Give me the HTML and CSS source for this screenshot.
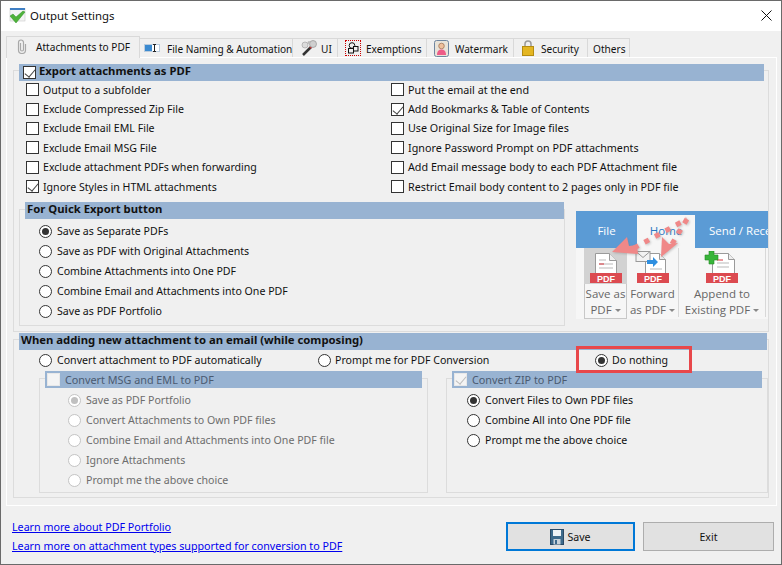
FILE: index.html
```html
<!DOCTYPE html>
<html lang="en">
<head>
<meta charset="utf-8">
<title>Output Settings</title>
<link rel="stylesheet" href="styles.css">
</head>
<body>
<div class="window">
  <header class="titlebar">
    <svg class="appicon" width="17" height="17" viewBox="0 0 17 17"><rect x="1" y="0" width="15" height="13" fill="#f4f4f4" stroke="#c9c9c9" stroke-width=".6"/><rect x="1" y="0" width="15" height="2" fill="#3f7fc4"/><path d="M1 8l3-2 3 3 7-6 2 1-9 11z" fill="#4fb33a" stroke="#2f8f2a" stroke-width=".5"/></svg>
    <span class="title">Output Settings</span>
    <svg class="close" width="11" height="11" viewBox="0 0 11 11"><path d="M.5.5l10 10M10.5.5l-10 10" stroke="#111" stroke-width="1" fill="none"/></svg>
  </header>

  <nav class="tabs">
    <div class="tab active t1"><svg width="10" height="15" viewBox="0 0 10 15"><path d="M3.500 4v6.500a1.500 1.500 0 0 0 3 0V3.500a2.500 2.500 0 0 0-5 0v7.500a3.500 3.500 0 0 0 7 0V5" fill="none" stroke="#a8a8a8" stroke-width="1.200"/></svg><span>Attachments to PDF</span></div>
    <div class="tab t2"><svg width="17" height="9" viewBox="0 0 17 9"><rect x=".5" y=".5" width="15" height="7" fill="#fff" stroke="#bcd"/><rect x="1" y="1" width="7" height="6" fill="#3b8ad0"/><path d="M9 .5h3M10.500.5v7M9 7.500h3" stroke="#222" fill="none"/></svg><span>File Naming &amp; Automation</span></div>
    <div class="tab t3"><svg width="18" height="17" viewBox="0 0 18 17"><path d="M3 15l8-8" stroke="#333" stroke-width="2.500"/><path d="M10 8l2-2" stroke="#c33" stroke-width="2"/><circle cx="13" cy="4" r="3.500" fill="#cfcfcf" stroke="#888" stroke-width=".6"/><circle cx="5" cy="5" r="3" fill="#dcdcdc" stroke="#999" stroke-width=".6"/><circle cx="9" cy="2.500" r="1.500" fill="#bbb"/></svg><span>UI</span></div>
    <div class="tab t4"><div class="focusbox"><svg width="12" height="12" viewBox="0 0 12 12"><circle cx="5" cy="3.500" r="2.800" fill="none" stroke="#111"/><rect x="1.500" y="6.500" width="5" height="4.500" fill="#f0f0f0" stroke="#111"/><rect x="6.500" y="4.500" width="4.500" height="4.500" fill="#f0f0f0" stroke="#111"/></svg></div><span>Exemptions</span></div>
    <div class="tab t5"><svg width="15" height="17" viewBox="0 0 15 17"><rect x=".5" y=".5" width="14" height="16" rx="2" fill="#e9e3d8" stroke="#6f86a0"/><circle cx="7.500" cy="6" r="2.800" fill="#f0c09c" stroke="#8a5a3a" stroke-width=".6"/><path d="M3 15c0-4 2-5.500 4.500-5.500S12 11 12 15z" fill="#ee5c88"/></svg><span>Watermark</span></div>
    <div class="tab t6"><svg width="12" height="16" viewBox="0 0 12 16"><path d="M3 7V4a3 3 0 0 1 6 0v3" fill="none" stroke="#9b9b9b" stroke-width="1.500"/><rect x="0.500" y="6.500" width="11" height="9" fill="#e4b622" stroke="#b58c12"/></svg><span>Security</span></div>
    <div class="tab t7"><span>Others</span></div>
  </nav>

  <main class="panel">
    <section class="group">
      <div class="bar bar-main"><span class="cb on barcb"></span><b>Export attachments as PDF</b></div>
      <div class="checks">
        <label class="opt"><span class="cb"></span>Output to a subfolder</label>
        <label class="opt"><span class="cb"></span>Put the email at the end</label>
        <label class="opt"><span class="cb"></span>Exclude Compressed Zip File</label>
        <label class="opt"><span class="cb on"></span>Add Bookmarks &amp; Table of Contents</label>
        <label class="opt"><span class="cb"></span>Exclude Email EML File</label>
        <label class="opt"><span class="cb"></span>Use Original Size for Image files</label>
        <label class="opt"><span class="cb"></span>Exclude Email MSG File</label>
        <label class="opt"><span class="cb"></span>Ignore Password Prompt on PDF attachments</label>
        <label class="opt"><span class="cb"></span>Exclude attachment PDFs when forwarding</label>
        <label class="opt"><span class="cb"></span>Add Email message body to each PDF Attachment file</label>
        <label class="opt"><span class="cb on"></span>Ignore Styles in HTML attachments</label>
        <label class="opt"><span class="cb"></span>Restrict Email body content to 2 pages only in PDF file</label>
      </div>
      <div class="quickrow">
        <div class="group quick">
          <div class="bar quickbar"><b>For Quick Export button</b></div>
          <div class="radios quickradios">
            <label class="opt"><span class="rb on"></span>Save as Separate PDFs</label>
            <label class="opt"><span class="rb"></span>Save as PDF with Original Attachments</label>
            <label class="opt"><span class="rb"></span>Combine Attachments into One PDF</label>
            <label class="opt"><span class="rb"></span>Combine Email and Attachments into One PDF</label>
            <label class="opt"><span class="rb"></span>Save as PDF Portfolio</label>
          </div>
        </div>
        <div class="ribbon">
          <div class="rtabs">
            <span class="rtab rfile">File</span>
            <span class="rtab rhome">Home</span>
            <span class="rtab rsend">Send / Rece</span>
          </div>
          <div class="rtools">
            <div class="tool tool-save">
              <div class="toolicon"><svg width="36" height="33" viewBox="0 0 36 33"><path d="M7.500 2.500h14l7 7v17h-21z" fill="#fff" stroke="#9a9a9a"/><path d="M21.500 2.500v7h7" fill="#eee" stroke="#9a9a9a"/><path d="M11 9h7M11 13h14M11 17h14" stroke="#b9b9b9"/><path d="M11 13h5" stroke="#d9343c"/><rect x="2" y="22" width="32" height="10" fill="#dc4a50"/><text x="18" y="30.500" class="pdftext">PDF</text></svg></div>
              <div class="toollabel labelbox">Save as<br>PDF<i class="caret"></i></div>
            </div>
            <div class="tool tool-fwd">
              <div class="toolicon"><svg width="38" height="33" viewBox="0 0 38 33"><path d="M11.500 2.500h14l6 6v18h-20z" fill="#fff" stroke="#9a9a9a"/><path d="M25.500 2.500v6h6" fill="#eee" stroke="#9a9a9a"/><rect x="2" y="0.500" width="14" height="10" fill="#f3f3f3" stroke="#9a9a9a"/><path d="M2 .5l7 6 7-6" fill="none" stroke="#9a9a9a"/><path d="M13 9h6v-3l5 5-5 5v-3h-6z" fill="#2f8fe0"/><path d="M16 18h12" stroke="#b9b9b9"/><rect x="3" y="22" width="32" height="10" fill="#dc4a50"/><text x="19" y="30.500" class="pdftext">PDF</text></svg></div>
              <div class="toollabel">Forward<br>as PDF<i class="caret"></i></div>
            </div>
            <div class="tool tool-app">
              <div class="toolicon"><svg width="36" height="33" viewBox="0 0 36 33"><path d="M8.500 2.500h16l6 6v18h-22z" fill="#fff" stroke="#9a9a9a"/><path d="M24.500 2.500v6h6" fill="#eee" stroke="#9a9a9a"/><path d="M13 12h12M13 16h12" stroke="#b9b9b9"/><path d="M13 9h6" stroke="#d9343c"/><path d="M6 0h5v4h4v5h-4v4H6V9H2V4h4z" transform="translate(-1 0)" fill="#38b53a" stroke="#2a8a2a" stroke-width=".6"/><rect x="2" y="22" width="32" height="10" fill="#dc4a50"/><text x="18" y="30.500" class="pdftext">PDF</text></svg></div>
              <div class="toollabel">Append to<br>Existing PDF<i class="caret"></i></div>
            </div>
          </div>
          <svg class="arrows" width="192" height="108" viewBox="0 0 192 108">
            <g fill="#f08888">
              <path d="M36 41L51 26l2 9 8-1 1 9z"/>
              <path d="M85 46l1-20 7 7 9-1z"/>
            </g>
            <path d="M58 37L111 8" stroke="#f08888" stroke-width="5" stroke-dasharray="5 7" fill="none"/>
            <path d="M96 33L111 8" stroke="#f08888" stroke-width="5" stroke-dasharray="5 7" fill="none"/>
          </svg>
        </div>
      </div>
    </section>

    <section class="group composing">
      <div class="bar bar-compose"><b>When adding new attachment to an email (while composing)</b></div>
      <div class="moderow">
        <label class="opt"><span class="rb"></span>Convert attachment to PDF automatically</label>
        <label class="opt"><span class="rb"></span>Prompt me for PDF Conversion</label>
        <label class="opt"><span class="rb on"></span>Do nothing</label>
      </div>
      <div class="highlight"></div>
      <div class="subs">
        <div class="group sub sub-left">
          <div class="bar subbar disabled"><span class="cb blank"></span><span class="subtitle">Convert MSG and EML to PDF</span></div>
          <div class="radios subradios-left disabled">
            <label class="opt"><span class="rb on"></span>Save as PDF Portfolio</label>
            <label class="opt"><span class="rb"></span>Convert Attachments to Own PDF files</label>
            <label class="opt"><span class="rb"></span>Combine Email and Attachments into One PDF file</label>
            <label class="opt"><span class="rb"></span>Ignore Attachments</label>
            <label class="opt"><span class="rb"></span>Prompt me the above choice</label>
          </div>
        </div>
        <div class="group sub sub-right">
          <div class="bar subbar disabled"><span class="cb blank on"></span><span class="subtitle">Convert ZIP to PDF</span></div>
          <div class="radios subradios-right">
            <label class="opt"><span class="rb on"></span>Convert Files to Own PDF files</label>
            <label class="opt"><span class="rb"></span>Combine All into One PDF file</label>
            <label class="opt"><span class="rb"></span>Prompt me the above choice</label>
          </div>
        </div>
      </div>
    </section>
  </main>

  <footer class="footer">
    <div class="links">
      <a href="#">Learn more about PDF Portfolio</a>
      <a href="#">Learn more on attachment types supported for conversion to PDF</a>
    </div>
    <div class="buttons">
      <button class="btn primary"><svg width="14" height="16" viewBox="0 0 14 16"><rect x=".5" y=".5" width="13" height="15" fill="#3d6a8c" stroke="#2a4a66"/><rect x="3" y="1" width="8" height="6" fill="#eef3f7"/><rect x="3.500" y="10" width="7" height="5.500" fill="#c9d3db"/><rect x="5" y="11" width="2" height="4" fill="#3d6a8c"/></svg>Save</button>
      <button class="btn">Exit</button>
    </div>
  </footer>
</div>
</body>
</html>
```
FILE: styles.css
```css
* { box-sizing: border-box; }
html, body { margin: 0; padding: 0; }
body {
  width: 782px;
  height: 565px;
  overflow: hidden;
  font-family: "Noto Sans", "Liberation Sans", sans-serif;
  font-size: 10.6px;
  color: #111;
  background: #f0f0f0;
}
svg { flex: none; }
.window {
  width: 782px;
  height: 565px;
  border: 1px solid #6a6a6a;
  background: #f0f0f0;
  display: flex;
  flex-direction: column;
  position: relative;
}
.titlebar {
  height: 30px;
  background: #fff;
  display: flex;
  align-items: center;
  padding: 0 9px 0 8px;
  flex: none;
}
.appicon { margin-right: 4px; }
.title { font-size: 11.4px; flex: 1; margin-bottom: 2px; }
.close { margin-bottom: 2px; }

.tabs {
  display: flex;
  align-items: flex-end;
  height: 22px;
  margin: 4px 0 0 5px;
  flex: none;
  position: relative;
  z-index: 2;
  font-size: 10.1px;
}
.tab {
  height: 19px;
  display: flex;
  align-items: center;
  border: 1px solid #d9d9d9;
  border-left: 0;
  border-bottom: 0;
  background: #f0f0f0;
  flex: none;
  white-space: nowrap;
}
.tab:not(.active) > span { margin-top: 2px; }
.tab.active {
  height: 22px;
  border-left: 1px solid #d9d9d9;
  margin-bottom: -1px;
  padding-bottom: 2px;
  background: #f0f0f0;
}
.t1 { width: 134px; padding-left: 10px; gap: 9px; }
.t2 { width: 153px; padding-left: 4px; gap: 6px; }
.t3 { width: 45px; padding-left: 7px; gap: 3px; }
.t4 { width: 89px; padding-left: 7px; gap: 5px; }
.t5 { width: 87px; padding-left: 7px; gap: 6px; }
.t6 { width: 74px; padding-left: 8px; gap: 7px; }
.t7 { width: 42px; padding-left: 5px; }
.focusbox {
  width: 16px;
  height: 16px;
  border: 1px dotted #c00;
  display: flex;
  align-items: center;
  justify-content: center;
  flex: none;
}

.panel {
  flex: none;
  height: 449px;
  margin-left: 5px;
  width: 771px;
  border: 1px solid #fff;
  padding: 12px 0 6px 6px;
}
.group {
  border: 1px solid #dcdcdc;
}
.panel > .group {
  width: 756px;
  padding-left: 5px;
}
.bar {
  height: 17px;
  margin-top: -7px;
  background: #98b3d2;
  display: flex;
  align-items: center;
  white-space: nowrap;
  color: #111;
}
.bar b { font-weight: 700; font-size: 11.3px; margin-bottom: 5px; }
.bar-main { margin-right: 4px; padding-left: 4px; gap: 3px; }
.barcb { background: #f0f0f0; }
.checks {
  display: grid;
  grid-template-columns: 365px 1fr;
  grid-auto-rows: 19.4px;
  height: 116px;
  margin: -1px 0 13px;
  padding-left: 7px;
}
.checks .opt:nth-child(even) { font-size: 10.75px; }
.opt {
  display: flex;
  align-items: center;
  white-space: nowrap;
}
.cb {
  width: 13px;
  height: 13px;
  border: 1px solid #333;
  background: #fff;
  flex: none;
  margin-right: 4px;
  position: relative;
  display: inline-block;
}
.cb.on::after {
  content: "";
  position: absolute;
  left: 3px;
  top: 0;
  width: 5px;
  height: 9px;
  border: solid #444;
  border-width: 0 1.300px 1.300px 0;
  transform: rotate(40deg);
}
.barcb { margin-right: 0; }
.rb {
  width: 13px;
  height: 13px;
  border: 1px solid #333;
  border-radius: 50%;
  background: #fff;
  flex: none;
  margin-right: 5px;
  position: relative;
  display: inline-block;
}
.rb.on::after {
  content: "";
  position: absolute;
  left: 2px;
  top: 2px;
  width: 7px;
  height: 7px;
  border-radius: 50%;
  background: #333;
}

.quickrow { display: flex; height: 122px; align-items: flex-start; }
.quick { width: 547px; height: 117px; }
.quickbar { margin: -8px 0 0 5px; padding-left: 2px; }
.radios { display: grid; grid-auto-rows: 20px; padding-top: 2px; }
.quickradios { padding-left: 19px; }

.ribbon {
  width: 192px;
  height: 108px;
  margin: 2px 0 0 11px;
  position: relative;
  background: #f6f6f6;
  flex: none;
  overflow: hidden;
}
.rtabs {
  height: 37px;
  background: #5b9bd5;
  display: flex;
  align-items: flex-end;
  font-family: "Open Sans", sans-serif;
  font-size: 11.5px;
  color: #fff;
  white-space: nowrap;
}
.rtab { height: 33px; display: flex; align-items: center; justify-content: center; flex: none; padding-bottom: 3px; }
.rfile { width: 61px; }
.rhome { width: 58px; background: #f6f6f6; color: #2b79c2; }
.rsend { width: 73px; justify-content: flex-start; padding-left: 14px; overflow: hidden; }
.rtools { display: flex; height: 71px; padding-left: 8px; font-family: "Open Sans", sans-serif; color: #666; font-size: 11.500px; }
.tool { display: flex; flex-direction: column; align-items: center; flex: none; }
.tool-save { width: 43px; height: 69px; }
.tool-fwd { width: 52px; border-right: 1px solid #d8d8d8; height: 69px; }
.tool-app { width: 87px; border-right: 1px solid #d8d8d8; height: 69px; }
.toolicon { height: 37px; width: 100%; display: flex; justify-content: center; padding-top: 3px; }
.tool-save .toolicon { background: #d2d2d2; }
.toollabel { text-align: center; line-height: 16px; white-space: nowrap; flex: 1; width: 100%; padding-top: 2px; }
.labelbox { border: 1px solid #c8c8c8; border-top: 0; }
.caret {
  display: inline-block;
  width: 0;
  height: 0;
  border: 3px solid transparent;
  border-top-color: #888;
  border-bottom: 0;
  margin: 0 0 2px 3px;
}
.pdftext { font-family: "Liberation Sans", sans-serif; font-weight: 700; font-size: 9px; fill: #fff; text-anchor: middle; }
.arrows { position: absolute; left: 0; top: 0; filter: drop-shadow(1px 1px 1px rgba(120, 120, 120, .4)); }

.composing { margin-top: 7px; height: 159px; position: relative; }
.bar-compose { margin-right: 1px; padding-left: 2px; }
.moderow {
  display: grid;
  grid-template-columns: 279px 277px 1fr;
  height: 20px;
  padding-left: 20px;
}
.moderow .opt:not(:first-child) .rb { margin-right: 4px; }
.highlight {
  position: absolute;
  left: 562px;
  top: 6px;
  width: 116px;
  height: 27px;
  border: 3px solid #e8474a;
  pointer-events: none;
}
.subs { display: flex; gap: 18px; margin-top: 8px; padding-left: 20px; }
.sub { height: 115px; }
.sub-left { width: 389px; }
.sub-right { width: 322px; }
.subbar { margin: -8px 5px 0; padding-left: 2px; }
.subtitle { font-size: 10.8px; margin-bottom: 1px; }
.disabled { color: #6d6d6d; }
.subbar.disabled { color: #4a5a70; }
.cb.blank { border: 1px solid #e8e8e8; margin-right: 5px; background: #f4f4f4; }
.cb.blank.on::after { border-color: #bdbdbd; }
.disabled .rb { border-color: #c4c4c4; }
.disabled .rb.on::after { background: #c0c0c0; }
.subradios-left { padding-left: 28px; }
.subradios-right { padding-left: 20px; }

.footer {
  flex: 1;
  display: flex;
  justify-content: space-between;
  padding: 16px 7px 0 11px;
}
.links { display: flex; flex-direction: column; gap: 4px; margin-top: -2px; font-size: 10.7px; }
.links a { color: #0000ee; text-decoration: underline; line-height: 15px; }
.buttons { display: flex; gap: 8px; height: 29px; }
.btn {
  width: 131px;
  height: 29px;
  font: inherit;
  color: #111;
  background: #e1e1e1;
  border: 1px solid #adadad;
  padding: 0;
  display: flex;
  align-items: center;
  justify-content: center;
  gap: 3px;
}
.btn.primary { border: 2px solid #0078d7; width: 129px; }
```
